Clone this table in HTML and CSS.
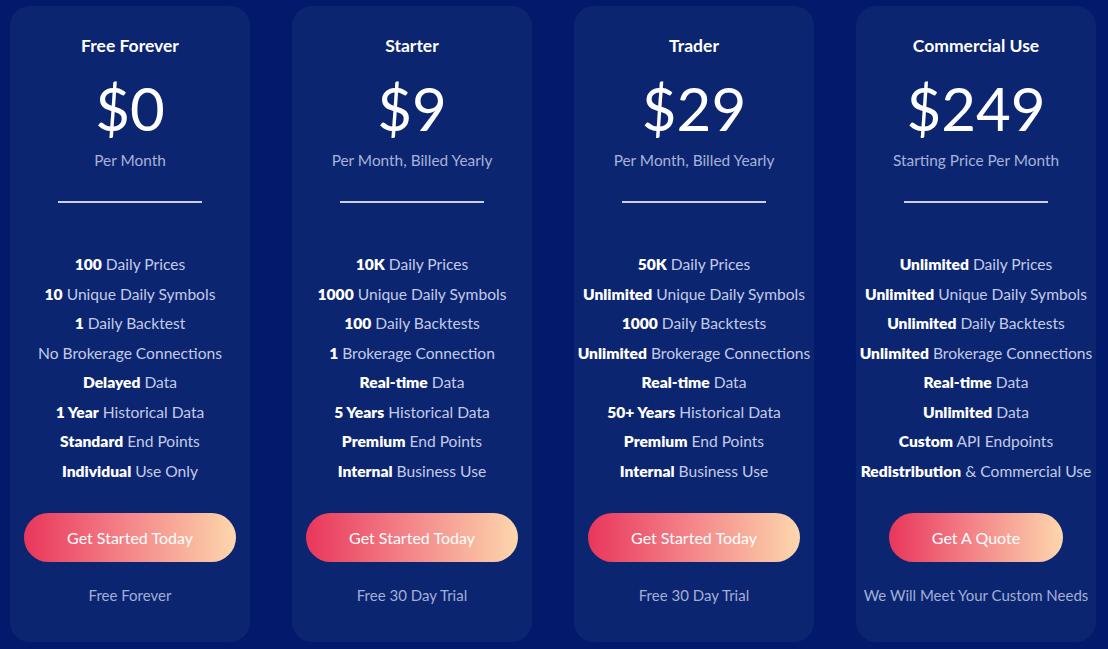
FILE: index.html
```html
<!DOCTYPE html>
<html lang="en">
<head>
<meta charset="utf-8">
<title>Pricing</title>
<link rel="stylesheet" href="styles.css">
</head>
<body>
<main class="plans">
  <section class="card">
    <h2 class="plan-name">Free Forever</h2>
    <div class="price">$0</div>
    <p class="period">Per Month</p>
    <hr class="divider">
    <ul class="features">
      <li><b>100</b> Daily Prices</li>
      <li><b>10</b> Unique Daily Symbols</li>
      <li><b>1</b> Daily Backtest</li>
      <li>No Brokerage Connections</li>
      <li><b>Delayed</b> Data</li>
      <li><b>1 Year</b> Historical Data</li>
      <li><b>Standard</b> End Points</li>
      <li><b>Individual</b> Use Only</li>
    </ul>
    <a class="cta" href="#">Get Started Today</a>
    <p class="note">Free Forever</p>
  </section>
  <section class="card">
    <h2 class="plan-name">Starter</h2>
    <div class="price">$9</div>
    <p class="period">Per Month, Billed Yearly</p>
    <hr class="divider">
    <ul class="features">
      <li><b>10K</b> Daily Prices</li>
      <li><b>1000</b> Unique Daily Symbols</li>
      <li><b>100</b> Daily Backtests</li>
      <li><b>1</b> Brokerage Connection</li>
      <li><b>Real-time</b> Data</li>
      <li><b>5 Years</b> Historical Data</li>
      <li><b>Premium</b> End Points</li>
      <li><b>Internal</b> Business Use</li>
    </ul>
    <a class="cta" href="#">Get Started Today</a>
    <p class="note">Free 30 Day Trial</p>
  </section>
  <section class="card">
    <h2 class="plan-name">Trader</h2>
    <div class="price">$29</div>
    <p class="period">Per Month, Billed Yearly</p>
    <hr class="divider">
    <ul class="features">
      <li><b>50K</b> Daily Prices</li>
      <li><b>Unlimited</b> Unique Daily Symbols</li>
      <li><b>1000</b> Daily Backtests</li>
      <li><b>Unlimited</b> Brokerage Connections</li>
      <li><b>Real-time</b> Data</li>
      <li><b>50+ Years</b> Historical Data</li>
      <li><b>Premium</b> End Points</li>
      <li><b>Internal</b> Business Use</li>
    </ul>
    <a class="cta" href="#">Get Started Today</a>
    <p class="note">Free 30 Day Trial</p>
  </section>
  <section class="card">
    <h2 class="plan-name">Commercial Use</h2>
    <div class="price">$249</div>
    <p class="period">Starting Price Per Month</p>
    <hr class="divider">
    <ul class="features">
      <li><b>Unlimited</b> Daily Prices</li>
      <li><b>Unlimited</b> Unique Daily Symbols</li>
      <li><b>Unlimited</b> Daily Backtests</li>
      <li><b>Unlimited</b> Brokerage Connections</li>
      <li><b>Real-time</b> Data</li>
      <li><b>Unlimited</b> Data</li>
      <li><b>Custom</b> API Endpoints</li>
      <li><b>Redistribution</b> &amp; Commercial Use</li>
    </ul>
    <a class="cta" href="#">Get A Quote</a>
    <p class="note">We Will Meet Your Custom Needs</p>
  </section>
</main>
</body>
</html>
```

FILE: styles.css
```css
* { box-sizing: border-box; }

html, body {
  margin: 0;
  padding: 0;
  background: #03196b;
}

body {
  font-family: "Lato", "Liberation Sans", sans-serif;
  color: #ffffff;
}

.plans {
  display: flex;
  gap: 42px;
  padding: 6px 12px 7px 10px;
}

.card {
  width: 240px;
  height: 636px;
  flex: none;
  background: #0b2571;
  border-radius: 20px;
  display: flex;
  flex-direction: column;
  align-items: center;
  padding-top: 30px;
  text-align: center;
}

.plan-name {
  margin: 0;
  font-size: 17.5px;
  line-height: 20px;
  font-weight: 700;
  color: #ffffff;
}

.price {
  margin-top: 16px;
  font-size: 60px;
  line-height: 72px;
  font-weight: 400;
  color: #ffffff;
}

.period {
  margin: 6px 0 0;
  font-size: 15.4px;
  line-height: 20px;
  color: #a7b2d8;
}

.divider {
  margin: 31px 0 0;
  width: 144px;
  height: 2px;
  border: 0;
  background: #c9d0ea;
}

.features {
  list-style: none;
  margin: 47px 0 0;
  padding: 0;
  font-size: 15.6px;
  line-height: 29.5px;
  color: #c3cbe6;
  white-space: nowrap;
}

.features b {
  color: #ffffff;
  font-weight: 800;
}

.cta {
  margin-top: 27px;
  height: 49px;
  padding: 0 43px;
  border-radius: 25px;
  display: flex;
  align-items: center;
  font-size: 16px;
  color: #ffffff;
  text-decoration: none;
  background: linear-gradient(90deg, #e9365b 0%, #f37f86 45%, #fdd7ad 100%);
}

.note {
  margin: 23px 0 0;
  font-size: 15px;
  line-height: 20px;
  color: #a3aed6;
}
```
